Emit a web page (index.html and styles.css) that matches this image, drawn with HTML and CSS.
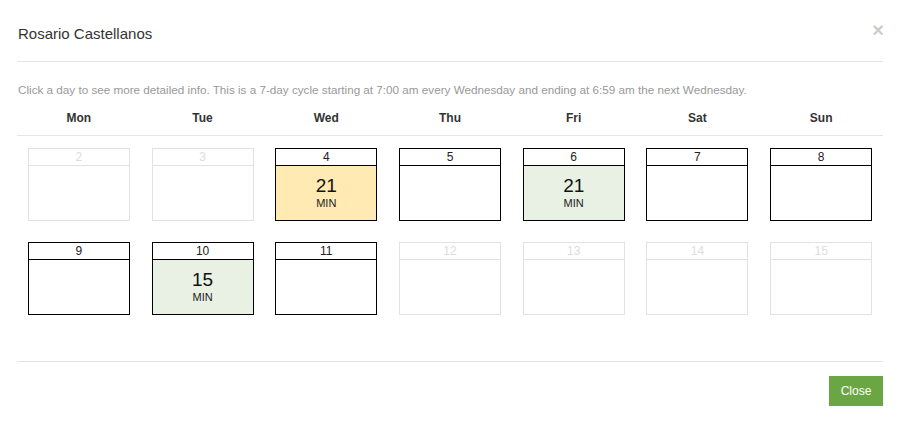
FILE: index.html
```html
<!DOCTYPE html>
<html>
<head>
<meta charset="utf-8">
<link rel="stylesheet" href="styles.css">
</head>
<body>
<div class="modal">
  <div class="modal-header">
    <h4 class="title">Rosario Castellanos</h4>
    <span class="close">&times;</span>
  </div>
  <div class="modal-body">
    <p class="desc">Click a day to see more detailed info. This is a 7-day cycle starting at 7:00 am every Wednesday and ending at 6:59 am the next Wednesday.</p>
    <div class="week head">
      <div class="dow">Mon</div><div class="dow">Tue</div><div class="dow">Wed</div><div class="dow">Thu</div><div class="dow">Fri</div><div class="dow">Sat</div><div class="dow">Sun</div>
    </div>
    <div class="weeks">
      <div class="week">
        <div class="col"><div class="cell off"><div class="num">2</div><div class="body"></div></div></div>
        <div class="col"><div class="cell off"><div class="num">3</div><div class="body"></div></div></div>
        <div class="col"><div class="cell"><div class="num">4</div><div class="body warn"><span class="val">21</span><span class="unit">MIN</span></div></div></div>
        <div class="col"><div class="cell"><div class="num">5</div><div class="body"></div></div></div>
        <div class="col"><div class="cell"><div class="num">6</div><div class="body ok"><span class="val">21</span><span class="unit">MIN</span></div></div></div>
        <div class="col"><div class="cell"><div class="num">7</div><div class="body"></div></div></div>
        <div class="col"><div class="cell"><div class="num">8</div><div class="body"></div></div></div>
      </div>
      <div class="week">
        <div class="col"><div class="cell"><div class="num">9</div><div class="body"></div></div></div>
        <div class="col"><div class="cell"><div class="num">10</div><div class="body ok"><span class="val">15</span><span class="unit">MIN</span></div></div></div>
        <div class="col"><div class="cell"><div class="num">11</div><div class="body"></div></div></div>
        <div class="col"><div class="cell off"><div class="num">12</div><div class="body"></div></div></div>
        <div class="col"><div class="cell off"><div class="num">13</div><div class="body"></div></div></div>
        <div class="col"><div class="cell off"><div class="num">14</div><div class="body"></div></div></div>
        <div class="col"><div class="cell off"><div class="num">15</div><div class="body"></div></div></div>
      </div>
    </div>
  </div>
  <div class="modal-footer">
    <button class="btn">Close</button>
  </div>
</div>
</body>
</html>
```
FILE: styles.css
```css
* { box-sizing: border-box; }
html, body { margin: 0; padding: 0; background: #fff; }
body { font-family: "Liberation Sans", Arial, sans-serif; color: #333; }
.modal { width: 903px; padding: 0 20px 0 17px; }
.modal-header {
  position: relative;
  padding: 24px 0 17px 1px;
  border-bottom: 1px solid #e5e5e5;
}
.title { margin: 0; font-size: 15px; line-height: 20px; font-weight: normal; color: #333; }
.close {
  position: absolute; right: -1px; top: 20px;
  font-size: 20px; line-height: 20px; font-weight: bold; color: #000; opacity: 0.2;
}
.modal-body { padding: 19px 0 0; }
.desc { margin: 0 0 0 1px; font-size: 11.7px; line-height: 17px; color: #999; }
.week { display: grid; grid-template-columns: repeat(7, 1fr); }
.week.head { margin-top: 12px; border-bottom: 1px solid #e5e5e5; padding-bottom: 8px; }
.dow { text-align: center; font-size: 12px; font-weight: bold; line-height: 17px; color: #333; }
.weeks { padding: 12px 0 0; display: flex; flex-direction: column; gap: 21px; }
.col { display: flex; justify-content: center; }
.cell { width: 102px; height: 73px; border: 1px solid #000; display: flex; flex-direction: column; background: #fff; }
.num { height: 17px; line-height: 16px; text-align: center; font-size: 12px; color: #222; border-bottom: 1px solid #000; }
.body { flex: 1; display: flex; flex-direction: column; align-items: center; padding-top: 10px; }
.val { font-size: 19px; line-height: 20px; color: #111; }
.unit { font-size: 11px; line-height: 14px; color: #222; margin-top: 0; }
.warn { background: #ffeab4; }
.ok { background: #e8f1e4; }
.cell.off { border-color: #e2e2e2; }
.cell.off .num { border-bottom-color: #e2e2e2; color: #ddd; }
.modal-footer {
  margin-top: 46px;
  border-top: 1px solid #e5e5e5;
  padding: 14px 0 20px;
  display: flex; justify-content: flex-end;
}
.btn {
  width: 54px; height: 30px; border: 0; border-radius: 0;
  background: #6ba644; color: #fff;
  font-family: "Liberation Sans", Arial, sans-serif; font-size: 12px;
  padding: 0;
}
```
